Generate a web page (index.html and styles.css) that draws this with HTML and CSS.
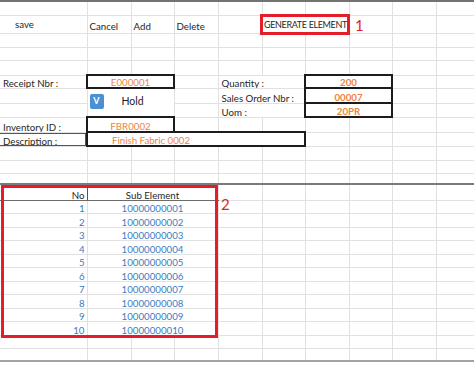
FILE: index.html
```html
<!DOCTYPE html>
<html lang="en">
<head>
    <meta charset="UTF-8">
    <meta name="viewport" content="width=device-width, initial-scale=1.0">
    <title>Generate Element</title>
    <link rel="stylesheet" href="styles.css">
</head>
<body>

<div class="sheet-wrap">
    <table class="sheet">
        <colgroup>
            <col class="col-a">
            <col class="col-44"><col class="col-43"><col class="col-44"><col class="col-44">
            <col class="col-43"><col class="col-44"><col class="col-43"><col class="col-44">
            <col class="col-last">
        </colgroup>
        <tbody>
            <tr class="h14"><td></td><td></td><td></td><td></td><td></td><td></td><td></td><td></td><td></td><td></td></tr>
            <tr class="h18 toolbar">
                <td class="save">save</td>
                <td class="action">Cancel</td>
                <td class="action">Add</td>
                <td class="action">Delete</td>
                <td></td>
                <td colspan="2" class="generate">GENERATE ELEMENT</td>
                <td></td><td></td><td></td>
            </tr>
            <tr class="h14"><td></td><td></td><td></td><td></td><td></td><td></td><td></td><td></td><td></td><td></td></tr>
            <tr class="h13"><td></td><td></td><td></td><td></td><td></td><td></td><td></td><td></td><td></td><td></td></tr>
            <tr class="h15"><td></td><td></td><td></td><td></td><td></td><td></td><td></td><td></td><td></td><td></td></tr>

            <tr class="h13">
                <td class="label">Receipt Nbr :</td>
                <td colspan="2" class="box value">E000001</td>
                <td></td>
                <td colspan="2" class="label">Quantity :</td>
                <td colspan="2" class="box value strong">200</td>
                <td></td><td></td>
            </tr>
            <tr class="h15">
                <td></td>
                <td colspan="2" rowspan="2" class="hold-cell">
                    <label class="hold"><span class="check">V</span>Hold</label>
                </td>
                <td></td>
                <td colspan="2" class="label">Sales Order Nbr :</td>
                <td colspan="2" class="box value strong">00007</td>
                <td></td><td></td>
            </tr>
            <tr class="h14">
                <td></td>
                <td></td>
                <td colspan="2" class="label">Uom :</td>
                <td colspan="2" class="box value strong">20PR</td>
                <td></td><td></td>
            </tr>
            <tr class="h15">
                <td class="label">Inventory ID :</td>
                <td colspan="2" class="box value">FBR0002</td>
                <td></td><td></td><td></td><td></td><td></td><td></td><td></td>
            </tr>
            <tr class="h14">
                <td class="label selected">Description :</td>
                <td colspan="5" class="box value desc">Finish Fabric 0002</td>
                <td></td><td></td><td></td><td></td>
            </tr>
            <tr class="h14"><td></td><td></td><td></td><td></td><td></td><td></td><td></td><td></td><td></td><td></td></tr>
            <tr class="h13"><td></td><td></td><td></td><td></td><td></td><td></td><td></td><td></td><td></td><td></td></tr>
            <tr class="h11"><td></td><td></td><td></td><td></td><td></td><td></td><td></td><td></td><td></td><td></td></tr>

            <tr class="h16 head">
                <td class="head-no">No</td>
                <td colspan="3" class="head-sub">Sub Element</td>
                <td></td><td></td><td></td><td></td><td></td><td></td>
            </tr>
            <tr class="h13"><td class="num">1</td><td colspan="3" class="sub">10000000001</td><td></td><td></td><td></td><td></td><td></td><td></td></tr>
            <tr class="h14"><td class="num">2</td><td colspan="3" class="sub">10000000002</td><td></td><td></td><td></td><td></td><td></td><td></td></tr>
            <tr class="h13"><td class="num">3</td><td colspan="3" class="sub">10000000003</td><td></td><td></td><td></td><td></td><td></td><td></td></tr>
            <tr class="h14"><td class="num">4</td><td colspan="3" class="sub">10000000004</td><td></td><td></td><td></td><td></td><td></td><td></td></tr>
            <tr class="h13"><td class="num">5</td><td colspan="3" class="sub">10000000005</td><td></td><td></td><td></td><td></td><td></td><td></td></tr>
            <tr class="h14"><td class="num">6</td><td colspan="3" class="sub">10000000006</td><td></td><td></td><td></td><td></td><td></td><td></td></tr>
            <tr class="h13"><td class="num">7</td><td colspan="3" class="sub">10000000007</td><td></td><td></td><td></td><td></td><td></td><td></td></tr>
            <tr class="h14"><td class="num">8</td><td colspan="3" class="sub">10000000008</td><td></td><td></td><td></td><td></td><td></td><td></td></tr>
            <tr class="h13"><td class="num">9</td><td colspan="3" class="sub">10000000009</td><td></td><td></td><td></td><td></td><td></td><td></td></tr>
            <tr class="h14"><td class="num">10</td><td colspan="3" class="sub">10000000010</td><td></td><td></td><td></td><td></td><td></td><td></td></tr>
            <tr class="h13"><td></td><td></td><td></td><td></td><td></td><td></td><td></td><td></td><td></td><td></td></tr>
            <tr class="h13"><td></td><td></td><td></td><td></td><td></td><td></td><td></td><td></td><td></td><td></td></tr>
        </tbody>
    </table>

    <div class="callout callout-generate"><span class="callout-num">1</span></div>
    <div class="callout callout-table"><span class="callout-num">2</span></div>
</div>

</body>
</html>
```

FILE: styles.css
```css
body {
    margin: 0;
    overflow: hidden;
    background-color: #fff;
    font-family: Lato, "Liberation Sans", sans-serif;
}

.sheet-wrap {
    position: relative;
}

.sheet {
    width: 474px;
    table-layout: fixed;
    border-collapse: collapse;
    border-top: 2px solid #737373;
    border-bottom: 2px solid #a3a3a3;
    font-size: 9.7px;
    color: #262626;
}

.col-a { width: 87px; }
.col-44 { width: 44px; }
.col-43 { width: 43px; }
.col-last { width: 38px; }

.h11 { height: 11px; }
.h13 { height: 13px; }
.h14 { height: 14px; }
.h15 { height: 15px; }
.h16 { height: 16px; }
.h18 { height: 18px; }

.sheet td {
    padding: 0 2px;
    border: 1px solid #e1e1e1;
    line-height: 10px;
    vertical-align: bottom;
    white-space: nowrap;
    overflow: hidden;
}

.sheet td:first-child {
    border-left: none;
}

.save {
    padding-left: 15px !important;
    vertical-align: middle !important;
}

.toolbar .action {
    padding-bottom: 2px;
}

.sheet td.generate {
    padding: 0 0 3px;
    overflow: visible;
    font-size: 9px;
    letter-spacing: -0.35px;
    text-align: center;
}

.label {
    padding-left: 3px !important;
}

.sheet td.box {
    border: 2px solid #1c1c1c;
}

.value {
    text-align: center;
    color: #ee8440;
}

.strong {
    font-weight: 700;
}

.sheet td.desc {
    text-align: left;
    padding-left: 24px;
}

.sheet td.hold-cell {
    padding: 0;
    vertical-align: middle;
}

.hold {
    display: flex;
    align-items: center;
    gap: 18px;
    padding-left: 2px;
    margin-top: -3px;
    font-size: 10.5px;
    color: #222;
}

.check {
    display: flex;
    align-items: center;
    justify-content: center;
    width: 14px;
    height: 15px;
    border-radius: 2px;
    background-color: #4b8fd5;
    color: #fff;
    font-size: 9px;
    font-weight: 700;
}

.selected {
    position: relative;
}

.selected::after {
    content: "";
    position: absolute;
    top: -1px;
    left: 0;
    right: -1px;
    bottom: -1px;
    border: 2px solid #217346;
    border-left: none;
}

.selected::before {
    content: "";
    position: absolute;
    right: -3px;
    bottom: -3px;
    width: 4px;
    height: 4px;
    background-color: #217346;
    z-index: 1;
}

.head td {
    border-top: 2px solid #7b7b7b;
}

.sheet td.head-no {
    text-align: right;
    border-right: 1px solid #555;
    border-bottom: 1px solid #6b6b6b;
}

.sheet td.head-sub {
    text-align: center;
    border-bottom: 1px solid #6b6b6b;
}

.num,
.sub {
    color: #3a7bc1;
}

.num {
    text-align: right;
}

.sub {
    text-align: center;
}

.callout {
    position: absolute;
    box-sizing: border-box;
    border: 3px solid #e31e2a;
}

.callout-generate {
    left: 260px;
    top: 14px;
    width: 90px;
    height: 21px;
}

.callout-table {
    left: 1px;
    top: 185px;
    width: 217px;
    height: 153px;
}

.callout-num {
    position: absolute;
    top: 1px;
    left: calc(100% + 8px);
    font-size: 15px;
    line-height: 1;
    color: #e31e2a;
}

.callout-table .callout-num {
    top: 9px;
    left: calc(100% + 6px);
}
```
